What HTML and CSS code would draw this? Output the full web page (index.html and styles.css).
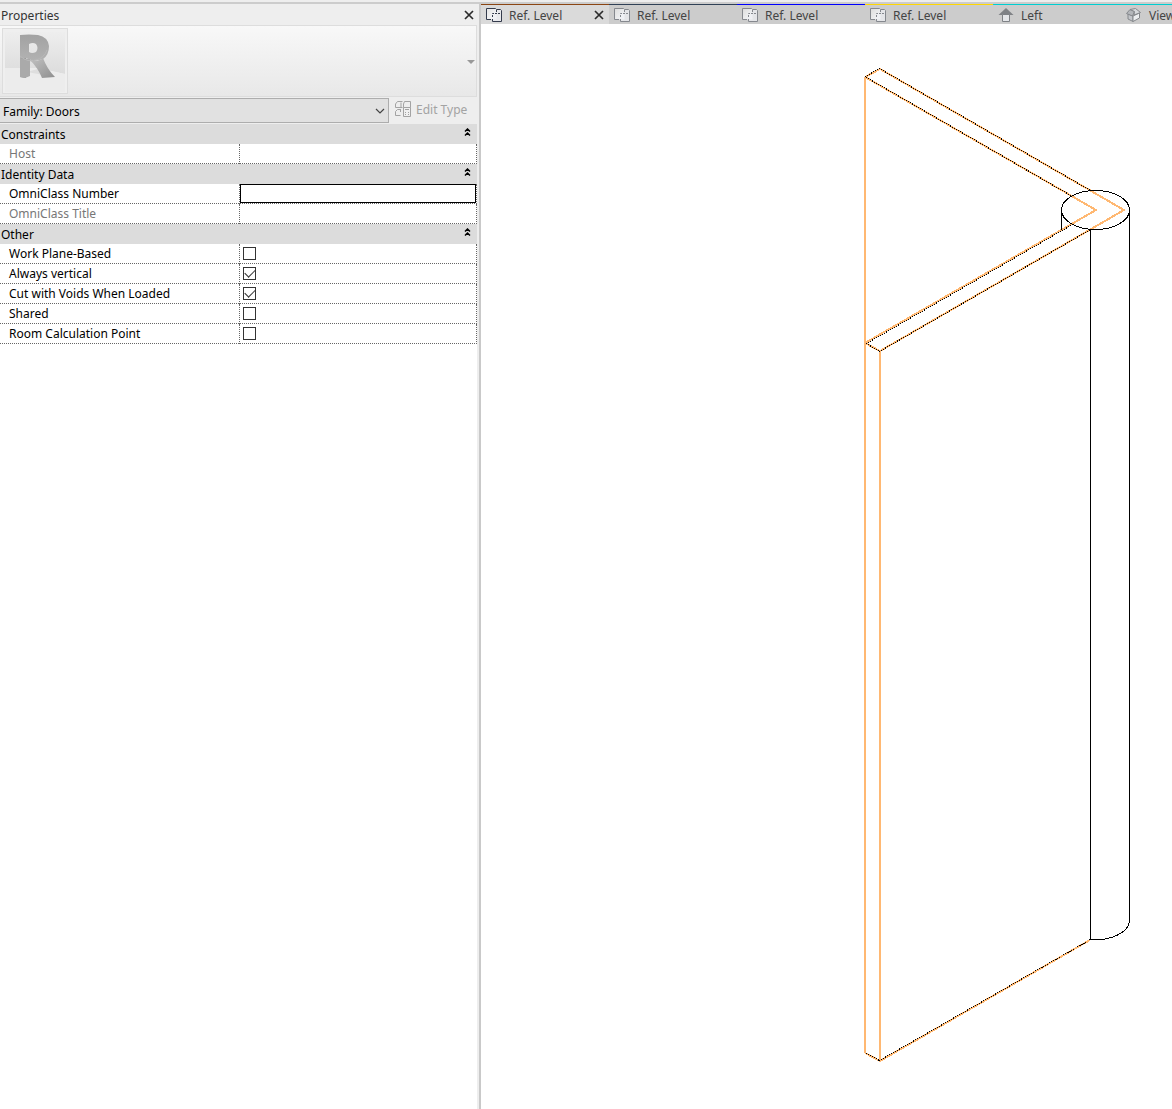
FILE: index.html
```html
<!DOCTYPE html>
<html lang="en">
<head>
  <meta charset="utf-8">
  <title>Properties</title>
  <link rel="stylesheet" href="styles.css">
</head>
<body>
  <svg class="defs" width="0" height="0" aria-hidden="true">
    <defs>
      <linearGradient id="sheet" x1="0" y1="0" x2="1" y2="1">
        <stop offset="0" stop-color="#fff" stop-opacity="0.3"/>
        <stop offset="1" stop-color="#f4f6fa"/>
      </linearGradient>
      <symbol id="plan" viewBox="0 0 16 14">
        <path d="M.5 .5H9.500L10.500 1.500V11.500H.5z" fill="url(#sheet)"/>
        <path d="M6.500 5.500H10.500V1.500H14.500L15.500 2.500V13.500H6.500z" fill="#eef0f3" fill-opacity="0.7"/>
        <path d="M5 11.500H.5V.5H9.500L10.500 1.500H14.500L15.500 2.500V13.500H6.500V11" fill="none" stroke="currentColor"/>
        <path d="M6.500 9V5.500H15M10.500 2V5" fill="none" stroke="currentColor" stroke-dasharray="2 1"/>
      </symbol>
      <symbol id="close" viewBox="0 0 10 10">
        <path d="M1 1l8 8M9 1L1 9" fill="none" stroke="#2b2b2b" stroke-width="1.700"/>
      </symbol>
      <symbol id="collapse" viewBox="0 0 7 8">
        <path d="M1 3.500L3.500 1L6 3.500M1 7.500L3.500 5L6 7.500" fill="none" stroke="#000" stroke-width="1.500"/>
      </symbol>
    </defs>
  </svg>

  <div class="app">
    <div class="properties">
      <div class="title-bar">
        <span>Properties</span>
        <button class="close-button" aria-label="Close properties"><svg width="10" height="10"><use href="#close"/></svg></button>
      </div>

      <div class="type-selector">
        <div class="preview">
          <svg width="60" height="60" viewBox="0 0 60 60">
            <defs>
              <linearGradient id="wall" x1="0" y1="0" x2="0" y2="1">
                <stop offset="0" stop-color="#eeeeee"/>
                <stop offset="1" stop-color="#dcdcdc"/>
              </linearGradient>
              <linearGradient id="face" x1="0" y1="0" x2="0" y2="1">
                <stop offset="0" stop-color="#a2a2a2"/>
                <stop offset="1" stop-color="#b2b2b2"/>
              </linearGradient>
              <linearGradient id="leg" x1="0" y1="0" x2="1" y2="1">
                <stop offset="0" stop-color="#c2c2c2"/>
                <stop offset="1" stop-color="#8e8e8e"/>
              </linearGradient>
            </defs>
            <path d="M0 0H60V42L32 36H0z" fill="url(#wall)"/>
            <path d="M0 36H32L60 42V60H0z" fill="#ececec"/>
            <path d="M22 40l14-4 8 8z" fill="#dedede"/>
            <path d="M15 3L21 4V46L15 45z" fill="#8d8d8d"/>
            <path fill-rule="evenodd" d="M15 3Q24 2 33 3Q43 5 44 14Q44 23 38 27Q33 29 26 28L21 26H15zM24 12V20Q27 22 31 20Q34 16 31 12Q28 10 24 12z" fill="url(#face)"/>
            <path d="M15 26L25 27V44L20 46L15 45z" fill="#aaa"/>
            <path d="M25 28Q34 30 38 26Q42 37 50 45L37 46Q33 36 25 28z" fill="url(#leg)"/>
            <path d="M15 24Q23 31 31 28Q39 26 42 18" fill="none" stroke="#b8b8b8"/>
          </svg>
        </div>
        <button class="type-button" aria-label="Choose type"><svg width="8" height="6" viewBox="0 0 8 6"><path d="M0 2h8L4 6z" fill="#999"/></svg></button>
      </div>

      <div class="filter-bar">
        <div class="family">
          <select class="family-select" aria-label="Family">
            <option>Family: Doors</option>
          </select>
          <svg class="family-arrow" width="10" height="6" viewBox="0 0 10 6"><path d="M1 1l4 4 4-4" fill="none" stroke="#444" stroke-width="1.200"/></svg>
        </div>
        <button class="edit-type" disabled>
          <svg width="17" height="17" viewBox="0 0 17 17" fill="none" stroke="#a3a3a3">
            <path d="M7.500 6.500H.5V3L2.500 .5H7.500M6 1.500V6M15.500 5V.5H9.500L8.500 3V6.500H15.500z"/>
            <path d="M5.500 14.500H.5V10.500L2.500 8.500H6M5.500 9v2"/>
            <path d="M8.500 6.500h7v9h-7z" fill="#f0f0f0"/>
            <path d="M10 8.500h4M10 11.500h1M13 11.500h1M10 13.500h1M13 13.500h1"/>
          </svg>
          <span>Edit Type</span>
        </button>
      </div>

      <table class="grid">
        <tbody>
          <tr class="group">
            <th colspan="2"><div class="group-title">Constraints<button class="collapse" aria-label="Collapse Constraints"><svg width="7" height="8"><use href="#collapse"/></svg></button></div></th>
          </tr>
          <tr class="disabled"><td>Host</td><td></td></tr>
        </tbody>
        <tbody>
          <tr class="group">
            <th colspan="2"><div class="group-title">Identity Data<button class="collapse" aria-label="Collapse Identity Data"><svg width="7" height="8"><use href="#collapse"/></svg></button></div></th>
          </tr>
          <tr><td><label for="omni-number">OmniClass Number</label></td><td><input type="text" id="omni-number"></td></tr>
          <tr class="disabled"><td>OmniClass Title</td><td></td></tr>
        </tbody>
        <tbody>
          <tr class="group">
            <th colspan="2"><div class="group-title">Other<button class="collapse" aria-label="Collapse Other"><svg width="7" height="8"><use href="#collapse"/></svg></button></div></th>
          </tr>
          <tr><td><label for="work-plane">Work Plane-Based</label></td><td><input type="checkbox" id="work-plane"></td></tr>
          <tr><td><label for="vertical">Always vertical</label></td><td><input type="checkbox" id="vertical" checked></td></tr>
          <tr><td><label for="voids">Cut with Voids When Loaded</label></td><td><input type="checkbox" id="voids" checked></td></tr>
          <tr><td><label for="shared">Shared</label></td><td><input type="checkbox" id="shared"></td></tr>
          <tr><td><label for="room-point">Room Calculation Point</label></td><td><input type="checkbox" id="room-point"></td></tr>
        </tbody>
      </table>
    </div>

    <div class="views">
      <div class="tabs">
        <div class="tab brown active">
          <button class="tab-name"><svg width="16" height="14"><use href="#plan"/></svg><span>Ref. Level</span></button>
          <button class="close-button" aria-label="Close view"><svg width="10" height="10"><use href="#close"/></svg></button>
        </div>
        <div class="tab navy"><button class="tab-name"><svg width="16" height="14"><use href="#plan"/></svg><span>Ref. Level</span></button></div>
        <div class="tab blue"><button class="tab-name"><svg width="16" height="14"><use href="#plan"/></svg><span>Ref. Level</span></button></div>
        <div class="tab yellow"><button class="tab-name"><svg width="16" height="14"><use href="#plan"/></svg><span>Ref. Level</span></button></div>
        <div class="tab cyan">
          <button class="tab-name">
            <svg width="16" height="14" viewBox="0 0 16 14"><path d="M8 0L15.500 7H.5z" fill="#7f8286"/><path d="M4.500 6.500h7v7h-7z" fill="#e4e6e9" stroke="#7f8286"/></svg><span>Left</span>
          </button>
        </div>
        <div class="tab cyan">
          <button class="tab-name">
            <svg width="16" height="14" viewBox="0 0 16 14" stroke="#85888c" stroke-linejoin="round"><path d="M2 6V11L7 13.500V8z" fill="#c3c6ca"/><path d="M7 8L13.500 5V10L7 13.500z" fill="#eceef0"/><path d="M.5 5.500L4 1.500L8.500 3.500L6.500 8z" fill="#b4b7bb"/><path d="M4 1.500L9.500 .5L14.500 4.500L8 7L8.500 3.500z" fill="#d6d9dc"/></svg><span>View</span>
          </button>
        </div>
      </div>

      <svg class="model" viewBox="481 24 691 1085" preserveAspectRatio="xMidYMin meet" shape-rendering="crispEdges" fill="none">
        <!-- selected sweep -->
        <g stroke="#ffb872" stroke-width="2">
          <path d="M865 77V1053M880 351V1061"/>
          <path d="M865 77L880 69L1124 210L880 351L865 343L1096 210L865 77"/>
          <path d="M865 1053L880 1061L1090 940"/>
        </g>
        <g stroke="#000" stroke-dasharray="1.155 1.155" stroke-dashoffset="0.577">
          <path d="M865.500 76.500L879.500 68.500"/>
          <path d="M879.500 68.500L1090.500 190.500"/>
          <path d="M866.500 77.500L1072.500 196.500"/>
          <path d="M866.500 343.500L1072.500 224.500"/>
          <path d="M866.500 343.500L879.500 351.500"/>
          <path d="M879.500 351.500L1090.500 229.500"/>
          <path d="M866.500 1053.500L879.500 1060.500"/>
          <path d="M879.500 1060.500L1090.500 939.500"/>
        </g>
        <!-- cylinder -->
        <g stroke="#000">
          <ellipse cx="1095.500" cy="210" rx="34" ry="19.500"/>
          <path d="M1061.500 210V230M1090.500 230V939.500M1129.500 210V920"/>
          <path d="M1129.500 920A34 19.500 0 0 1 1090.500 939.500"/>
        </g>
      </svg>
    </div>
  </div>
</body>
</html>
```
FILE: styles.css
```css
* {
  box-sizing: border-box;
}

body {
  margin: 0;
  font-family: "Noto Sans", "Open Sans", sans-serif;
  font-size: 12px;
  line-height: 18px;
  color: #000;
  background-color: #fff;
}

button {
  padding: 0;
  border: none;
  background: none;
  font: inherit;
  color: inherit;
}

svg {
  display: block;
  flex: none;
}

.defs {
  position: absolute;
}

.app {
  display: flex;
  min-height: 100vh;
  border-top: 2px solid #eee;
}

.properties {
  flex: none;
  width: 481px;
  border-top: 2px solid #ccc;
  border-right: 2px solid #c9c9c9;
  background: linear-gradient(to left, #eee 2px, #fff 2px);
}

.title-bar {
  display: flex;
  align-items: center;
  justify-content: space-between;
  height: 21px;
  padding: 0 5px 0 1px;
  background-color: #eee;
  color: #333;
}

.title-bar span,
.tab-name span {
  padding-top: 2px;
}

.type-selector {
  display: flex;
  align-items: center;
  justify-content: space-between;
  height: 72px;
  margin-right: 2px;
  padding: 0 1px 0 2px;
  border: 1px solid #ddd;
  border-left: none;
  background: linear-gradient(#f8f8f8, #e8e8e8);
}

.preview {
  padding: 3px 2px 1px;
  border: 1px solid #ddd;
  background-color: #efefef;
}

.filter-bar {
  display: flex;
  height: 27px;
  padding: 1px 0;
  background-color: #eee;
}

.family {
  position: relative;
  width: 389px;
}

.family-select {
  width: 100%;
  height: 25px;
  padding: 2px 3px 0;
  border: 1px solid #adadad;
  border-left: none;
  border-radius: 0;
  background-color: #e1e1e1;
  font: inherit;
  color: #000;
  appearance: none;
}

.family-arrow {
  position: absolute;
  right: 4px;
  top: 10px;
  pointer-events: none;
}

.edit-type {
  display: flex;
  align-items: center;
  gap: 4px;
  height: 23px;
  padding-left: 6px;
  color: #a3a3a3;
}

.grid {
  width: 477px;
  table-layout: fixed;
  border-collapse: separate;
  border-spacing: 0;
}

.grid th,
.grid td {
  height: 20px;
  padding: 0;
  text-align: left;
  font-weight: normal;
}

.grid th {
  background-color: #dcdcdc;
}

.grid td {
  padding-left: 9px;
  border-bottom: 1px dotted #666;
}

.grid td:first-child {
  width: 239px;
}

.grid td + td {
  padding: 0;
  border-left: 1px dotted #666;
  border-right: 1px dotted #666;
}

.grid .disabled {
  color: #777;
}

.grid label,
.grid input {
  display: block;
}

.group-title {
  display: flex;
  justify-content: space-between;
  height: 20px;
  padding: 2px 6px 0 1px;
}

.collapse {
  height: 12px;
}

.grid input[type="text"] {
  width: 100%;
  height: 19px;
  padding: 0 2px;
  border: 1px solid #000;
  font: inherit;
}

.grid input[type="checkbox"] {
  width: 13px;
  height: 13px;
  margin: 0 3px;
  border: 1px solid #333;
  background-color: #fff;
  appearance: none;
}

/* tick */
.grid input[type="checkbox"]:checked::before {
  content: "";
  display: block;
  width: 9px;
  height: 5px;
  margin: 1px;
  border-left: 1px solid #333;
  border-bottom: 1px solid #333;
  transform: rotate(-45deg);
}

.views {
  flex: 1;
  min-width: 0;
  border-top: 2px solid #ccc;
}

.tabs {
  display: flex;
  height: 20px;
  overflow: hidden;
  background-color: #ccc;
}

.tab {
  display: flex;
  flex: none;
  align-items: center;
  justify-content: space-between;
  width: 128px;
  padding: 0 5px;
  border-top: 1px solid;
}

.tab.active {
  background-color: #dadada;
}

.tab-name {
  display: flex;
  align-items: center;
  gap: 7px;
  color: #444;
}

.tab-name svg {
  color: #85888e;
}

.active .tab-name svg {
  color: #343b4c;
}

.brown { border-color: #8b4513; }
.navy { border-color: #2f4056; }
.blue { border-color: #0000ff; }
.yellow { border-color: #ffd700; }
.cyan { border-color: #00ced1; }

.model {
  width: 100%;
}
```
